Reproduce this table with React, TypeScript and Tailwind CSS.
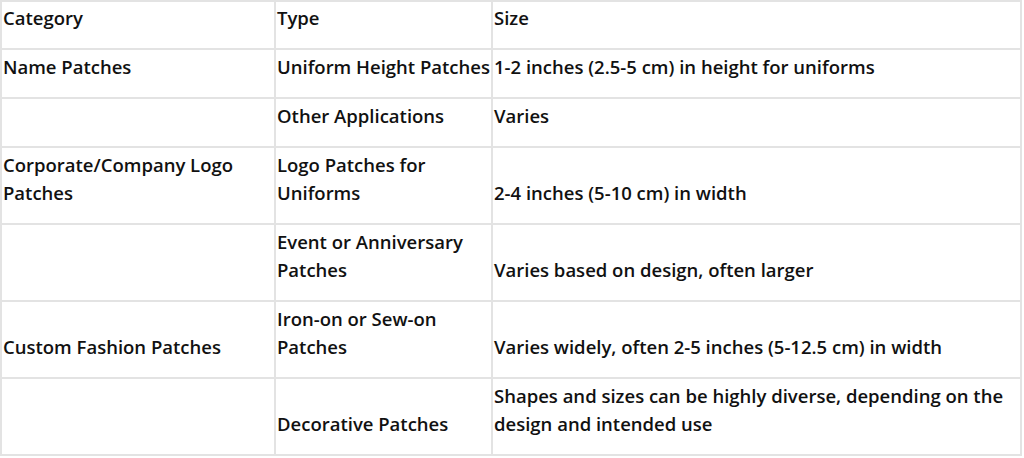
const rows: { category: string[]; type: string[]; size: string[] }[] = [
  { category: ["Name Patches"], type: ["Uniform Height Patches"], size: ["1-2 inches (2.5-5 cm) in height for uniforms"] },
  { category: [], type: ["Other Applications"], size: ["Varies"] },
  { category: ["Corporate/Company Logo", "Patches"], type: ["Logo Patches for", "Uniforms"], size: ["2-4 inches (5-10 cm) in width"] },
  { category: [], type: ["Event or Anniversary", "Patches"], size: ["Varies based on design, often larger"] },
  { category: ["Custom Fashion Patches"], type: ["Iron-on or Sew-on", "Patches"], size: ["Varies widely, often 2-5 inches (5-12.5 cm) in width"] },
  {
    category: [],
    type: ["Decorative Patches"],
    size: ["Shapes and sizes can be highly diverse, depending on the", "design and intended use"],
  },
];

function Lines({ lines }: { lines: string[] }) {
  return (
    <>
      {lines.map((l, i) => (
        <span key={i} className="block whitespace-nowrap">
          {l}
        </span>
      ))}
    </>
  );
}

const base = "border-2 border-[#e3e3e3] align-bottom pl-[1px] pr-1 text-left";
const head = base + " pt-[2px] pb-[16px] font-semibold";
const cell = base + " pt-[3px] pb-[16px]";

export default function App() {
  return (
    <div className="w-[1024px] h-[458px] bg-white" style={{ fontFamily: '"Open Sans", "Liberation Sans", sans-serif' }}>
      <table className="w-[1022px] table-fixed border-collapse text-[18.5px] leading-[28px] font-semibold text-[#111]">
        <colgroup>
          <col className="w-[274px]" />
          <col className="w-[217px]" />
          <col />
        </colgroup>
        <thead>
          <tr>
            <th className={head}>Category</th>
            <th className={head}>Type</th>
            <th className={head}>Size</th>
          </tr>
        </thead>
        <tbody>
          {rows.map((r, i) => (
            <tr key={i}>
              <td className={cell}>
                <Lines lines={r.category} />
              </td>
              <td className={cell}>
                <Lines lines={r.type} />
              </td>
              <td className={cell}>
                <Lines lines={r.size} />
              </td>
            </tr>
          ))}
        </tbody>
      </table>
    </div>
  );
}
